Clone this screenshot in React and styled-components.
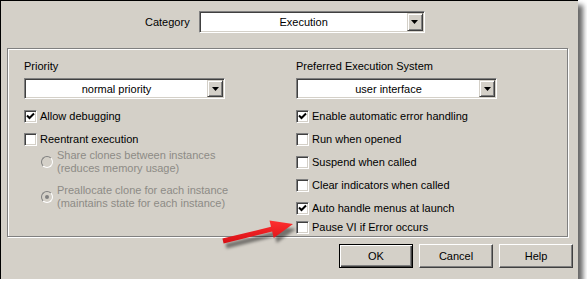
import React from 'react'
import styled, { createGlobalStyle } from 'styled-components'

const GlobalStyle = createGlobalStyle`
    body {
        margin: 0;
        background: #fff;
        font-family: "Liberation Sans", Arial, sans-serif;
        font-size: 11px;
        color: #000;
    }
`

const Window = styled.div`
    position: relative;
    width: 577px;
    height: 278px;
    background: #d4d0c8;
    border-top: 1px solid #000;
    border-left: 1px solid #000;
    box-shadow: 5px 5px 5px rgba(0, 0, 0, 0.6);
    display: flex;
    flex-direction: column;
`

const CategoryRow = styled.div`
    display: flex;
    align-items: center;
    gap: 9px;
    margin-top: 10px;
    padding-left: 144px;
`

const Label = styled.div`
    line-height: 13px;
    white-space: nowrap;
    margin-bottom: ${p => p.$below || 0}px;
`

const Combo = styled.div`
    display: flex;
    box-sizing: border-box;
    width: ${p => p.$width}px;
    height: ${p => p.$height}px;
    background: #fff;
    border: 1px solid;
    border-color: #808080 #fff #fff #808080;
    box-shadow: inset 1px 1px 0 #404040, inset -1px -1px 0 #d4d0c8;
    padding: 1px;
`

const ComboText = styled.div`
    flex: 1;
    display: flex;
    align-items: center;
    justify-content: center;
    white-space: nowrap;
`

const ComboButton = styled.div`
    width: 16px;
    box-sizing: border-box;
    display: flex;
    align-items: center;
    justify-content: center;
    background: #d4d0c8;
    border: 1px solid;
    border-color: #d4d0c8 #404040 #404040 #d4d0c8;
    box-shadow: inset 1px 1px 0 #fff, inset -1px -1px 0 #808080;
`

const Group = styled.div`
    box-sizing: border-box;
    width: 561px;
    height: 189px;
    margin: 15px 0 0 6px;
    border: 1px solid #808080;
    box-shadow: inset 1px 1px 0 #fff, 1px 1px 0 #fff;
    padding: 11px 0 0 16px;
    display: grid;
    grid-template-columns: 272px 1fr;
`

const Column = styled.div`
    display: flex;
    flex-direction: column;
`

const Options = styled.div`
    display: flex;
    flex-direction: column;
    gap: 10px;
    margin-top: 11px;
`

const CheckRow = styled.div`
    display: flex;
    align-items: center;
    gap: 3px;
    height: 13px;
    line-height: 13px;
    white-space: nowrap;
    margin-top: ${p => (p.$tight ? '-4px' : '0')};
`

const Box = styled.div`
    width: 13px;
    height: 13px;
    box-sizing: border-box;
    flex: none;
    background: #fff;
    border: 1px solid;
    border-color: #808080 #fff #fff #808080;
    box-shadow: inset 1px 1px 0 #404040, inset -1px -1px 0 #d4d0c8;
    display: flex;
    align-items: center;
    justify-content: center;
`

const RadioGroup = styled.div`
    display: flex;
    flex-direction: column;
    gap: 9px;
    margin: -7px 0 0 17px;
`

const RadioRow = styled.div`
    display: flex;
    align-items: center;
    gap: 4px;
    color: #8d8b86;
    line-height: 13px;
    white-space: nowrap;
`

const Radio = styled.div`
    width: 12px;
    height: 12px;
    box-sizing: border-box;
    flex: none;
    border-radius: 50%;
    border: 1px solid;
    border-color: #808080 #fff #fff #808080;
    background: #d4d0c8;
    display: flex;
    align-items: center;
    justify-content: center;

    &::after {
        content: '';
        display: ${p => (p.$checked ? 'block' : 'none')};
        width: 4px;
        height: 4px;
        border-radius: 50%;
        background: #808080;
    }
`

const ButtonRow = styled.div`
    display: flex;
    justify-content: flex-end;
    gap: 6px;
    margin-top: 7px;
    padding-right: 5px;
`

const Button = styled.div`
    width: 74px;
    height: 24px;
    box-sizing: border-box;
    display: flex;
    align-items: center;
    justify-content: center;
    background: #d4d0c8;
    border: 1px solid;
    border-color: ${p => (p.$default ? '#000' : '#fff #404040 #404040 #fff')};
    box-shadow: ${p =>
        p.$default
            ? 'inset 1px 1px 0 #fff, inset -1px -1px 0 #404040, inset -2px -2px 0 #808080'
            : 'inset -1px -1px 0 #808080'};
`

const Arrow = styled.svg`
    position: absolute;
    left: 209px;
    top: 209px;
    overflow: visible;
`

const DownArrow = () => (
    <svg width="7" height="4" viewBox="0 0 7 4">
        <path d="M0 0H7L3.5 4Z" fill="#000" />
    </svg>
)

const Check = () => (
    <svg width="9" height="9" viewBox="0 0 9 9">
        <path d="M1 3.5L3.5 6L8 1.5" fill="none" stroke="#000" strokeWidth="2" />
    </svg>
)

const Checkbox = ({ checked, tight, children }) => (
    <CheckRow $tight={tight}>
        <Box>{checked && <Check />}</Box>
        {children}
    </CheckRow>
)

const Dropdown = ({ width, height, value }) => (
    <Combo $width={width} $height={height}>
        <ComboText>{value}</ComboText>
        <ComboButton>
            <DownArrow />
        </ComboButton>
    </Combo>
)

const arrowPoints = '12.4,28.6 61,16.8 59.5,10.5 83,14 63.7,27.9 62.2,21.6 13.6,33.4'

const App = () => {
    return (
        <>
            <GlobalStyle />
            <Window>
                <CategoryRow>
                    <Label>Category</Label>
                    <Dropdown width={226} height={22} value="Execution" />
                </CategoryRow>
                <Group>
                    <Column>
                        <Label $below={5}>Priority</Label>
                        <Dropdown width={201} height={21} value="normal priority" />
                        <Options>
                            <Checkbox checked>Allow debugging</Checkbox>
                            <Checkbox>Reentrant execution</Checkbox>
                            <RadioGroup>
                                <RadioRow>
                                    <Radio />
                                    <div>
                                        Share clones between instances
                                        <br />
                                        (reduces memory usage)
                                    </div>
                                </RadioRow>
                                <RadioRow>
                                    <Radio $checked />
                                    <div>
                                        Preallocate clone for each instance
                                        <br />
                                        (maintains state for each instance)
                                    </div>
                                </RadioRow>
                            </RadioGroup>
                        </Options>
                    </Column>
                    <Column>
                        <Label $below={5}>Preferred Execution System</Label>
                        <Dropdown width={201} height={21} value="user interface" />
                        <Options>
                            <Checkbox checked>Enable automatic error handling</Checkbox>
                            <Checkbox>Run when opened</Checkbox>
                            <Checkbox>Suspend when called</Checkbox>
                            <Checkbox>Clear indicators when called</Checkbox>
                            <Checkbox checked>Auto handle menus at launch</Checkbox>
                            <Checkbox tight>Pause VI if Error occurs</Checkbox>
                        </Options>
                    </Column>
                </Group>
                <ButtonRow>
                    <Button $default>OK</Button>
                    <Button>Cancel</Button>
                    <Button>Help</Button>
                </ButtonRow>
                <Arrow width="95" height="45" viewBox="0 0 95 45">
                    <defs>
                        <filter id="blur" x="-20%" y="-50%" width="140%" height="200%">
                            <feGaussianBlur stdDeviation="1.6" />
                        </filter>
                        <linearGradient id="red" x1="0" y1="0" x2="0" y2="1">
                            <stop offset="0" stopColor="#ff3030" />
                            <stop offset="1" stopColor="#d80e14" />
                        </linearGradient>
                    </defs>
                    <polygon
                        points={arrowPoints}
                        transform="translate(3 5)"
                        fill="rgba(0,0,0,0.45)"
                        filter="url(#blur)"
                    />
                    <polygon points={arrowPoints} fill="url(#red)" />
                </Arrow>
            </Window>
        </>
    )
}

export default App
